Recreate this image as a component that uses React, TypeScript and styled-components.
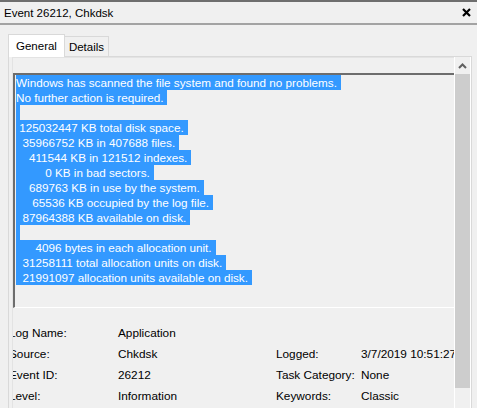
import React from "react";
import styled, { createGlobalStyle } from "styled-components";

const GlobalStyle = createGlobalStyle`
  html, body {
    margin: 0;
    padding: 0;
    background: #f0f0f0;
  }
  body {
    font-family: "Liberation Sans", Arial, sans-serif;
    color: #000;
  }
`;

const Window = styled.div`
  width: 477px;
  height: 408px;
  overflow: hidden;
  background: #f0f0f0;
  border-top: 2px solid #6e6e6e;
  box-sizing: border-box;
`;

const TitleBar = styled.div`
  height: 21px;
  display: flex;
  align-items: center;
  justify-content: space-between;
  padding: 0 6px 0 4px;
  border-bottom: 2px solid #a3a3a3;
  font-size: 11.5px;
`;

const CloseBtn = styled.svg`
  width: 9px;
  height: 9px;
  display: block;
`;

const Body = styled.div`
  padding: 8px 5px 0 8px;
`;

const TabStrip = styled.div`
  display: flex;
  align-items: flex-end;
  height: 23px;
`;

const Tab = styled.div<{ $active?: boolean }>`
  box-sizing: border-box;
  height: ${({ $active }) => ($active ? "23px" : "20px")};
  padding: 0 ${({ $active }) => ($active ? "7px" : "4px")};
  border: 1px solid #d9d9d9;
  border-bottom: none;
  border-left: ${({ $active }) => ($active ? "1px solid #d9d9d9" : "none")};
  background: ${({ $active }) => ($active ? "#ffffff" : "#f0f0f0")};
  font-size: 11.5px;
  display: flex;
  align-items: center;
  position: relative;
  z-index: ${({ $active }) => ($active ? 1 : 0)};
  margin-bottom: ${({ $active }) => ($active ? "-1px" : "0")};
`;

const TabPage = styled.div`
  border: 1px solid #d9d9d9;
  border-bottom: none;
  padding-left: 3px;
  height: 360px;
  display: flex;
`;

const ScrollContent = styled.div`
  flex: 1;
  min-width: 0;
  overflow: hidden;
  border-left: 1px solid #e3e3e3;
  border-top: 1px solid #e3e3e3;
`;

const TextBox = styled.div`
  margin-top: 15px;
  height: 235px;
  box-sizing: border-box;
  border-top: 2px solid #6d6d6d;
  border-left: 2px solid #6d6d6d;
  border-bottom: 1px solid #ffffff;
  padding-left: 1px;
  background: #f0f0f0;
  font-size: 11.7px;
`;

const Line = styled.div`
  height: 15px;
  line-height: 15px;
`;

const Sel = styled.span`
  display: inline-block;
  height: 15px;
  background: #3399ff;
  color: #ffffff;
  white-space: pre;
  padding-right: 4px;
`;

const DetailsGrid = styled.div`
  margin: 14px 0 0 -4px;
  display: grid;
  grid-template-columns: 109px 158px 85px auto;
  grid-auto-rows: 21px;
  align-items: center;
  font-size: 11.8px;
  white-space: nowrap;
`;

const Cell = styled.div<{ $col: number }>`
  grid-column: ${({ $col }) => $col};
`;

const Scrollbar = styled.div`
  width: 15px;
  border-left: 1px solid #ffffff;
  border-right: 1px solid #ffffff;
  background: #f0f0f0;
  display: flex;
  flex-direction: column;
`;

const ArrowBtn = styled.div`
  height: 17px;
  display: flex;
  align-items: center;
  justify-content: center;
`;

const Thumb = styled.div`
  height: 314px;
  background: #cdcdcd;
`;

const message = [
  "Windows has scanned the file system and found no problems.",
  "No further action is required.",
  "",
  " 125032447 KB total disk space.",
  "  35966752 KB in 407688 files.",
  "    411544 KB in 121512 indexes.",
  "         0 KB in bad sectors.",
  "    689763 KB in use by the system.",
  "     65536 KB occupied by the log file.",
  "  87964388 KB available on disk.",
  "",
  "      4096 bytes in each allocation unit.",
  "  31258111 total allocation units on disk.",
  "  21991097 allocation units available on disk.",
];

const details: [number, string][][] = [
  [[1, "Log Name:"], [2, "Application"]],
  [[1, "Source:"], [2, "Chkdsk"], [3, "Logged:"], [4, "3/7/2019 10:51:27"]],
  [[1, "Event ID:"], [2, "26212"], [3, "Task Category:"], [4, "None"]],
  [[1, "Level:"], [2, "Information"], [3, "Keywords:"], [4, "Classic"]],
];

export default function App() {
  return (
    <Window>
      <GlobalStyle />
      <TitleBar>
        <span>Event 26212, Chkdsk</span>
        <CloseBtn viewBox="0 0 9 9">
          <path d="M1 1 L8 8 M8 1 L1 8" stroke="#000" strokeWidth="2.2" />
        </CloseBtn>
      </TitleBar>
      <Body>
        <TabStrip>
          <Tab $active>General</Tab>
          <Tab>Details</Tab>
        </TabStrip>
        <TabPage>
          <ScrollContent>
            <TextBox>
              {message.map((l, i) => (
                <Line key={i}>
                  <Sel>{l}</Sel>
                </Line>
              ))}
            </TextBox>
            <DetailsGrid>
              {details.map((row) =>
                row.map(([col, text]) => (
                  <Cell key={text} $col={col}>
                    {text}
                  </Cell>
                ))
              )}
            </DetailsGrid>
          </ScrollContent>
          <Scrollbar>
            <ArrowBtn>
              <svg width="9" height="6" viewBox="0 0 9 6">
                <path d="M1 5 L4.5 1.5 L8 5" stroke="#606060" strokeWidth="2" fill="none" />
              </svg>
            </ArrowBtn>
            <Thumb />
          </Scrollbar>
        </TabPage>
      </Body>
    </Window>
  );
}
